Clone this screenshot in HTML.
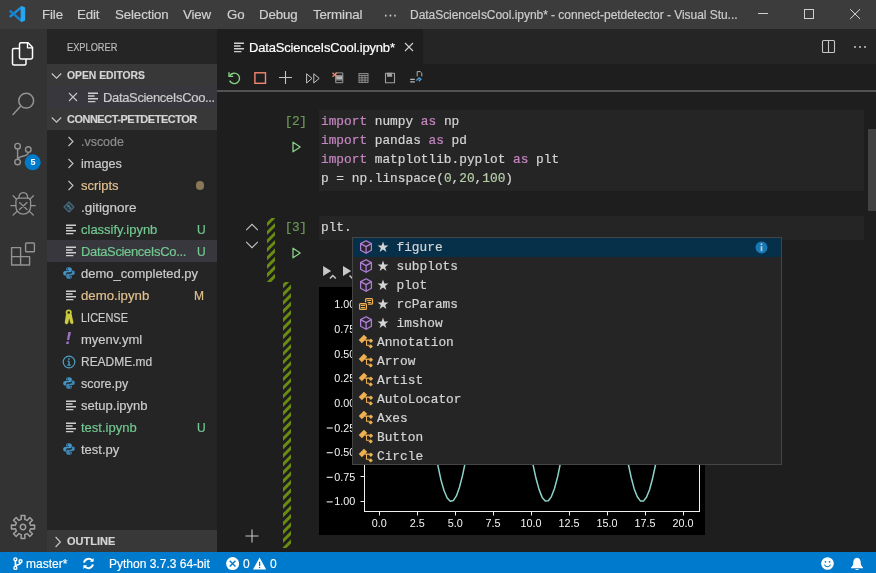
<!DOCTYPE html>
<html>
<head>
<meta charset="utf-8">
<title>VS Code</title>
<style>
*{box-sizing:border-box;margin:0;padding:0}
html,body{width:876px;height:573px;overflow:hidden;background:#1e1e1e}
body{font-family:"Liberation Sans",sans-serif;font-size:13px;color:#cccccc;position:relative;will-change:transform;-webkit-text-stroke:0.18px}
.abs{position:absolute}
#title{left:0;top:0;width:876px;height:29px;background:#3c3c3c}
#title .m{position:absolute;top:-0.3px;height:29px;line-height:29px;font-size:13.3px;letter-spacing:-0.12px;color:#d0d0d0;white-space:nowrap}
#act{left:0;top:29px;width:47px;height:523px;background:#333333}
#side{left:47px;top:29px;width:170px;height:523px;background:#252526}
.hdr{position:absolute;left:0;width:170px;height:22px;background:#383838;line-height:22px;font-size:11px;font-weight:bold;color:#d4d4d4;white-space:nowrap}
.hdr span{position:absolute;left:20px;top:0}
.row{position:absolute;left:0;width:170px;height:22px;line-height:22px;font-size:13px;color:#cccccc;white-space:nowrap}
.row .t{position:absolute;left:34px;top:0.5px}
.row .s{position:absolute;top:0.5px;font-size:12px}
.row svg{position:absolute}
.sx{display:inline-block;transform-origin:0 50%}
#tabs{left:217px;top:29px;width:659px;height:35px;background:#252526}
#tab{left:0;top:0;width:206px;height:35px;background:#1e1e1e}
#status{left:0;top:552px;width:876px;height:22px;background:#007acc;color:#fff;font-size:12px;line-height:22px}
#status .m{position:absolute;top:0.9px;white-space:nowrap;-webkit-text-stroke:0.15px}
.code{font-family:"Liberation Mono",monospace;font-size:12.8px;white-space:pre;color:#d4d4d4;-webkit-text-stroke:0.2px}
.cl{position:absolute;left:0;height:19px;line-height:19px}
.kw{color:#c586c0}.nm{color:#b5cea8}
.sg{position:absolute;left:0;width:428px;height:19px}
.sg .tx{position:absolute;top:0.2px;height:19px;line-height:19px;font-family:"Liberation Mono",monospace;font-size:12.8px;color:#d4d4d4;white-space:pre;-webkit-text-stroke:0.2px}
.sg svg{position:absolute}
</style>
</head>
<body>
<div id="title" class="abs">
<svg class="abs" style="left:0;top:0" width="36" height="29" viewBox="0 0 36 29"><path d="M9.8 16.9 L20.9 7.6" stroke="#1a8fdb" stroke-width="2.3" fill="none"/><path d="M9.8 10.6 L20.9 20.4" stroke="#1482cf" stroke-width="2.4" fill="none"/><path d="M20.6 6.3 L21.9 5.9 L25.2 7.5 V20.5 L21.9 22.1 L20.6 21.7 Z" fill="#25a6f2"/></svg>
<div class="m" id="m1" style="left:42px">File</div>
<div class="m" id="m2" style="left:77px">Edit</div>
<div class="m" id="m3" style="left:115px">Selection</div>
<div class="m" id="m4" style="left:183px">View</div>
<div class="m" id="m5" style="left:227px">Go</div>
<div class="m" id="m6" style="left:259px">Debug</div>
<div class="m" id="m7" style="left:313px">Terminal</div>
<div class="m" id="m8" style="left:383.5px;letter-spacing:0.2px">&#183;&#183;&#183;</div>
<div class="m" id="m9" style="left:410px;top:0.7px;font-size:12px;color:#cccccc;letter-spacing:-0.04px">DataScienceIsCool.ipynb* - connect-petdetector - Visual Stu...</div>
<svg class="abs" style="left:740px;top:0" width="136" height="29" viewBox="0 0 136 29"><g stroke="#d0d0d0" stroke-width="1" fill="none" shape-rendering="crispEdges"><path d="M18 13.5 H28"/><rect x="64.5" y="9.5" width="9" height="9"/></g><path d="M110.2 9.2 L120 18.9 M120 9.2 L110.2 18.9" stroke="#d8d8d8" stroke-width="1" fill="none"/></svg>
</div>
<div id="act" class="abs">
<svg class="abs" style="left:0;top:1px" width="47" height="250" viewBox="0 30 47 250" fill="none">
<g stroke="#ffffff" stroke-width="1.5" stroke-linejoin="round">
<path d="M19.5 48.5 H14 a1.5 1.5 0 0 0 -1.5 1.5 V63.5 a1.5 1.5 0 0 0 1.5 1.5 H24.5 a1.5 1.5 0 0 0 1.5 -1.5 V59"/>
<path d="M21 42.8 H28 L32.5 47.3 V57.5 a1.5 1.5 0 0 1 -1.5 1.5 H21 a1.5 1.5 0 0 1 -1.5 -1.5 V44.3 a1.5 1.5 0 0 1 1.5 -1.5 Z"/>
<path d="M27.5 43 V47.8 H32.3" stroke-width="1.3"/>
</g>
<g stroke="#939393" stroke-width="1.5">
<circle cx="26.2" cy="100.7" r="7.4"/>
<path d="M20.8 106 L12.6 115"/>
</g>
<g stroke="#939393" stroke-width="1.4">
<circle cx="17.6" cy="146.2" r="2.8"/>
<circle cx="17.6" cy="162" r="2.8"/>
<circle cx="28.3" cy="149.6" r="2.8"/>
<path d="M17.6 149 V159.2 M28.3 152.4 C28.3 157 18.5 155.5 17.6 159.2"/>
</g>
<circle cx="32.7" cy="162.3" r="8" fill="#007acc"/>
<g stroke="#939393" stroke-width="1.3" stroke-linecap="round">
<path d="M18.6 198.2 H28 C29.8 198.2 30.6 200 30.6 202 V206.5 C30.6 211 27.5 214.2 23.3 214.2 C19.1 214.2 15.9 211 15.9 206.5 V202 C15.9 200 16.8 198.2 18.6 198.2 Z"/>
<path d="M18.9 198 C18.9 194.5 20.8 192.6 23.3 192.6 C25.8 192.6 27.7 194.5 27.7 198"/>
<path d="M19.5 202.6 L27 209.6 M27 202.6 L19.5 209.6"/>
<path d="M13.1 195.7 L16.6 199.4 M33.4 195.7 L29.9 199.4 M10.9 205.7 H15.6 M31 205.7 H35.2 M13.1 215 L17.2 211.1 M33.3 215 L29.2 211.1"/>
</g>
<g stroke="#939393" stroke-width="1.4" stroke-linejoin="round">
<path d="M11.6 247.6 H20.6 V256.6 H29.6 V265 H11.6 Z M11.6 256.6 H20.6 V265"/>
<rect x="25.6" y="243" width="8.8" height="8.8" rx="0.8"/>
</g>
</svg>
<div class="abs" style="left:27px;top:127px;width:12px;height:12px;line-height:12px;text-align:center;font-size:9px;font-weight:bold;color:#fff;-webkit-text-stroke:0">5</div>
<svg class="abs" style="left:9px;top:484px" width="28" height="28" viewBox="-14 -14 28 28" fill="none" stroke="#a0a0a0" stroke-width="1.5" stroke-linejoin="round">
<path d="M-1.75 -7.60 L-1.93 -11.54 L1.93 -11.54 L1.75 -7.60 L4.13 -6.61 L6.79 -9.53 L9.53 -6.79 L6.61 -4.13 L7.60 -1.75 L11.54 -1.93 L11.54 1.93 L7.60 1.75 L6.61 4.13 L9.53 6.79 L6.79 9.53 L4.13 6.61 L1.75 7.60 L1.93 11.54 L-1.93 11.54 L-1.75 7.60 L-4.13 6.61 L-6.79 9.53 L-9.53 6.79 L-6.61 4.13 L-7.60 1.75 L-11.54 1.93 L-11.54 -1.93 L-7.60 -1.75 L-6.61 -4.13 L-9.53 -6.79 L-6.79 -9.53 L-4.13 -6.61 Z"/>
<circle cx="0" cy="0" r="2.7"/>
</svg>
</div>
<div id="side" class="abs">
<div class="abs" id="expl" style="left:20px;top:0;height:35px;line-height:36px;font-size:11px;color:#bbbbbb"><span class="sx" style="transform:scaleX(0.84)">EXPLORER</span></div>
<div class="hdr" style="top:35px"><svg style="position:absolute;left:4.1px;top:6.5px" width="11" height="10" viewBox="0 0 11 10"><path d="M0.8 2.5 L5.5 7.2 L10.2 2.5" fill="none" stroke="#c8c8c8" stroke-width="1.1"/></svg><span id="hh1" class="sx" style="transform:scaleX(0.94)">OPEN EDITORS</span></div>
<div class="row" style="top:57px;background:#37373d"><svg style="left:21px;top:6px" width="10" height="10" viewBox="0 0 10 10"><path d="M1 1 L9 9 M9 1 L1 9" stroke="#c5c5c5" stroke-width="1.1" fill="none"/></svg><svg style="left:41px;top:6px" width="11" height="11" viewBox="0 0 11 11"><path d="M0 1.2 H10 M0 4 H6.6 M0 6.8 H10 M0 9.6 H7.4" stroke="#cfcfcf" stroke-width="1.4" fill="none"/></svg><span class="t" id="oe" style="left:56px;letter-spacing:-0.35px">DataScienceIsCoo...</span></div>
<div class="hdr" style="top:79px"><svg style="position:absolute;left:4.1px;top:6.5px" width="11" height="10" viewBox="0 0 11 10"><path d="M0.8 2.5 L5.5 7.2 L10.2 2.5" fill="none" stroke="#c8c8c8" stroke-width="1.1"/></svg><span id="hh2" class="sx" style="letter-spacing:-0.45px;transform:scaleX(0.993)">CONNECT-PETDETECTOR</span></div>
<div class="row" style="top:101px"><svg style="left:20px;top:6px" width="8" height="11" viewBox="0 0 8 11"><path d="M1.5 1 L6 5.5 L1.5 10" fill="none" stroke="#c5c5c5" stroke-width="1.1"/></svg><span class="t" style="color:#8c8c8c;display:inline-block;transform-origin:0 50%;transform:scaleX(0.956)">.vscode</span></div>
<div class="row" style="top:123px"><svg style="left:20px;top:6px" width="8" height="11" viewBox="0 0 8 11"><path d="M1.5 1 L6 5.5 L1.5 10" fill="none" stroke="#c5c5c5" stroke-width="1.1"/></svg><span class="t" style="color:#cccccc;display:inline-block;transform-origin:0 50%;transform:scaleX(0.976)">images</span></div>
<div class="row" style="top:145px"><svg style="left:20px;top:6px" width="8" height="11" viewBox="0 0 8 11"><path d="M1.5 1 L6 5.5 L1.5 10" fill="none" stroke="#c5c5c5" stroke-width="1.1"/></svg><span class="t" style="color:#e2c08d">scripts</span><span style="position:absolute;left:148.8px;top:7.4px;width:8.2px;height:8.2px;border-radius:4.1px;background:#8a7758"></span></div>
<div class="row" style="top:167px"><svg style="left:15.8px;top:5px" width="12" height="12" viewBox="0 0 12 12"><path d="M6 1 L11 6 L6 11 L1 6 Z" fill="#2b3a42" stroke="#456b7c" stroke-width="1.1" stroke-linejoin="round"/><circle cx="4.9" cy="4.9" r="0.9" fill="#5b8497"/><circle cx="7.1" cy="7.1" r="0.9" fill="#5b8497"/><path d="M4.9 4.9 L7.1 7.1 M6 3.9 V6" stroke="#5b8497" stroke-width="0.8"/></svg><span class="t" style="color:#cccccc;display:inline-block;transform-origin:0 50%;transform:scaleX(1.037)">.gitignore</span></div>
<div class="row" style="top:189px"><svg style="left:19.3px;top:6px" width="11" height="11" viewBox="0 0 11 11"><path d="M0 1.2 H10 M0 4 H6.6 M0 6.8 H10 M0 9.6 H7.4" stroke="#cfcfcf" stroke-width="1.4" fill="none"/></svg><span class="t" style="color:#73c991">classify.ipynb</span><span class="s" style="color:#73c991;left:150px">U</span></div>
<div class="row" style="top:211px;background:#37373d"><svg style="left:19.3px;top:6px" width="11" height="11" viewBox="0 0 11 11"><path d="M0 1.2 H10 M0 4 H6.6 M0 6.8 H10 M0 9.6 H7.4" stroke="#cfcfcf" stroke-width="1.4" fill="none"/></svg><span class="t" style="color:#73c991;letter-spacing:-0.35px">DataScienceIsCo...</span><span class="s" style="color:#73c991;left:150px">U</span></div>
<div class="row" style="top:233px"><svg style="left:16.2px;top:5px" width="12" height="12" viewBox="0 0 12 12"><path d="M5.9 0.3 C3.6 0.3 3.2 1.2 3.2 2.1 V3.4 H6 V4 H1.9 C0.7 4 0.2 5 0.2 6.2 C0.2 7.5 0.7 8.4 1.9 8.4 H3 V7 C3 5.9 3.8 5.2 4.9 5.2 H7.4 C8.3 5.2 8.8 4.6 8.8 3.8 V2.1 C8.8 1 7.9 0.3 5.9 0.3 Z" fill="#4494c4"/><path d="M6.1 11.7 C8.4 11.7 8.8 10.8 8.8 9.9 V8.6 H6 V8 H10.1 C11.3 8 11.8 7 11.8 5.8 C11.8 4.5 11.3 3.6 10.1 3.6 H9 V5 C9 6.1 8.2 6.8 7.1 6.8 H4.6 C3.7 6.8 3.2 7.4 3.2 8.2 V9.9 C3.2 11 4.1 11.7 6.1 11.7 Z" fill="#3b86b4"/><circle cx="4.6" cy="1.9" r="0.55" fill="#252526"/><circle cx="7.4" cy="10.1" r="0.55" fill="#252526"/></svg><span class="t" style="color:#cccccc">demo_completed.py</span></div>
<div class="row" style="top:255px"><svg style="left:19.3px;top:6px" width="11" height="11" viewBox="0 0 11 11"><path d="M0 1.2 H10 M0 4 H6.6 M0 6.8 H10 M0 9.6 H7.4" stroke="#cfcfcf" stroke-width="1.4" fill="none"/></svg><span class="t" style="color:#e2c08d;display:inline-block;transform-origin:0 50%;transform:scaleX(1.015)">demo.ipynb</span><span class="s" style="color:#e2c08d;left:147px">M</span></div>
<div class="row" style="top:277px"><svg style="left:17px;top:2.5px" width="10" height="16" viewBox="0 0 10 16"><circle cx="4.7" cy="3.5" r="2.2" fill="none" stroke="#cbcb41" stroke-width="1.7"/><path d="M2 5.2 L7.6 5 L9.5 13.8 L8.3 15.3 L6.4 14.2 L5.1 9.2 L4.3 14.2 L2.1 15.4 L0.7 13.8 Z" fill="#cbcb41"/></svg><span class="t" style="color:#cccccc;display:inline-block;transform-origin:0 50%;transform:scaleX(0.845)">LICENSE</span></div>
<div class="row" style="top:299px"><div style="position:absolute;left:18.5px;top:0;color:#a074c4;font-weight:bold;font-style:italic;font-size:17px;line-height:21px">!</div><span class="t" style="color:#cccccc">myenv.yml</span></div>
<div class="row" style="top:321px"><svg style="left:15px;top:4.5px" width="14" height="14" viewBox="0 0 14 14"><circle cx="7" cy="7" r="5.8" fill="none" stroke="#4f9fc4" stroke-width="1.2"/><path d="M7 6 V10 M5.6 6.2 H7 M5.4 10.2 H8.6" stroke="#4f9fc4" stroke-width="1.3" fill="none"/><circle cx="6.9" cy="3.9" r="0.9" fill="#4f9fc4"/></svg><span class="t" style="color:#cccccc;display:inline-block;transform-origin:0 50%;transform:scaleX(0.92)">README.md</span></div>
<div class="row" style="top:343px"><svg style="left:16.2px;top:5px" width="12" height="12" viewBox="0 0 12 12"><path d="M5.9 0.3 C3.6 0.3 3.2 1.2 3.2 2.1 V3.4 H6 V4 H1.9 C0.7 4 0.2 5 0.2 6.2 C0.2 7.5 0.7 8.4 1.9 8.4 H3 V7 C3 5.9 3.8 5.2 4.9 5.2 H7.4 C8.3 5.2 8.8 4.6 8.8 3.8 V2.1 C8.8 1 7.9 0.3 5.9 0.3 Z" fill="#4494c4"/><path d="M6.1 11.7 C8.4 11.7 8.8 10.8 8.8 9.9 V8.6 H6 V8 H10.1 C11.3 8 11.8 7 11.8 5.8 C11.8 4.5 11.3 3.6 10.1 3.6 H9 V5 C9 6.1 8.2 6.8 7.1 6.8 H4.6 C3.7 6.8 3.2 7.4 3.2 8.2 V9.9 C3.2 11 4.1 11.7 6.1 11.7 Z" fill="#3b86b4"/><circle cx="4.6" cy="1.9" r="0.55" fill="#252526"/><circle cx="7.4" cy="10.1" r="0.55" fill="#252526"/></svg><span class="t" style="color:#cccccc;display:inline-block;transform-origin:0 50%;transform:scaleX(0.96)">score.py</span></div>
<div class="row" style="top:365px"><svg style="left:19.3px;top:6px" width="11" height="11" viewBox="0 0 11 11"><path d="M0 1.2 H10 M0 4 H6.6 M0 6.8 H10 M0 9.6 H7.4" stroke="#cfcfcf" stroke-width="1.4" fill="none"/></svg><span class="t" style="color:#cccccc">setup.ipynb</span></div>
<div class="row" style="top:387px"><svg style="left:19.3px;top:6px" width="11" height="11" viewBox="0 0 11 11"><path d="M0 1.2 H10 M0 4 H6.6 M0 6.8 H10 M0 9.6 H7.4" stroke="#cfcfcf" stroke-width="1.4" fill="none"/></svg><span class="t" style="color:#73c991">test.ipynb</span><span class="s" style="color:#73c991;left:150px">U</span></div>
<div class="row" style="top:409px"><svg style="left:16.2px;top:5px" width="12" height="12" viewBox="0 0 12 12"><path d="M5.9 0.3 C3.6 0.3 3.2 1.2 3.2 2.1 V3.4 H6 V4 H1.9 C0.7 4 0.2 5 0.2 6.2 C0.2 7.5 0.7 8.4 1.9 8.4 H3 V7 C3 5.9 3.8 5.2 4.9 5.2 H7.4 C8.3 5.2 8.8 4.6 8.8 3.8 V2.1 C8.8 1 7.9 0.3 5.9 0.3 Z" fill="#4494c4"/><path d="M6.1 11.7 C8.4 11.7 8.8 10.8 8.8 9.9 V8.6 H6 V8 H10.1 C11.3 8 11.8 7 11.8 5.8 C11.8 4.5 11.3 3.6 10.1 3.6 H9 V5 C9 6.1 8.2 6.8 7.1 6.8 H4.6 C3.7 6.8 3.2 7.4 3.2 8.2 V9.9 C3.2 11 4.1 11.7 6.1 11.7 Z" fill="#3b86b4"/><circle cx="4.6" cy="1.9" r="0.55" fill="#252526"/><circle cx="7.4" cy="10.1" r="0.55" fill="#252526"/></svg><span class="t" style="color:#cccccc">test.py</span></div>
<div class="hdr" style="top:501px"><svg style="position:absolute;left:6.5px;top:5.5px" width="8" height="12" viewBox="0 0 8 12"><path d="M1.6 1 L6.4 6 L1.6 11" fill="none" stroke="#c8c8c8" stroke-width="1.1"/></svg><span>OUTLINE</span></div>
</div>
<div id="tabs" class="abs">
<div id="tab" class="abs">
<svg class="abs" style="left:17px;top:12.5px" width="11" height="11" viewBox="0 0 11 11"><path d="M0 1.2 H10 M0 4 H6.6 M0 6.8 H10 M0 9.6 H7.4" stroke="#cfcfcf" stroke-width="1.4" fill="none"/></svg>
<div class="abs" id="tabt" style="left:32px;top:0.7px;height:35px;line-height:36px;color:#ffffff;font-size:13px;white-space:nowrap;letter-spacing:-0.19px">DataScienceIsCool.ipynb*</div>
<svg class="abs" style="left:187px;top:13px" width="10" height="10" viewBox="0 0 10 10"><path d="M1 1 L9 9 M9 1 L1 9" stroke="#d0d0d0" stroke-width="1.1" fill="none"/></svg>
</div>
<svg class="abs" style="left:604px;top:10px" width="16" height="15" viewBox="0 0 16 15"><rect x="1.5" y="1.5" width="12" height="12" rx="1" fill="none" stroke="#c5c5c5" stroke-width="1.1"/><path d="M7.5 1.5 V13.5" stroke="#c5c5c5" stroke-width="1.1"/></svg>
<svg class="abs" style="left:635px;top:16px" width="16" height="4" viewBox="0 0 16 4"><circle cx="3" cy="2" r="1" fill="#c5c5c5"/><circle cx="8" cy="2" r="1" fill="#c5c5c5"/><circle cx="13" cy="2" r="1" fill="#c5c5c5"/></svg>
</div>
<div id="ed" class="abs" style="left:217px;top:64px;width:659px;height:488px;background:#1e1e1e">
<svg class="abs" style="left:0;top:0" width="230" height="26" viewBox="217 64 230 26" fill="none">
<g stroke="#89d185" stroke-width="1.4"><path d="M229.9 75.6 A5.2 5.2 0 1 1 229.6 80.6"/><path d="M229 72.2 V76.4 H233.2" stroke-linejoin="miter"/></g>
<rect x="254.9" y="72.8" width="10.6" height="10.5" stroke="#f48771" stroke-width="1.4"/>
<path d="M285.5 71 V84 M279 77.5 H292" stroke="#c5c5c5" stroke-width="1.1"/>
<g stroke="#c5c5c5" stroke-width="1" stroke-linejoin="round"><path d="M306.6 73.8 L312 78.4 L306.6 83 Z"/><path d="M313.8 73.8 L319.2 78.4 L313.8 83 Z"/></g>
<g stroke="#9a9a9a" stroke-width="1"><path d="M335.7 72.9 H342.8 V82.7 H335.7 Z M335.7 75.6 H342.8 M335.7 80 H342.8"/></g>
<rect x="336.2" y="76.2" width="6.2" height="3.2" fill="#b8b8b8"/>
<path d="M332.5 72.7 L336.7 76.9 M336.7 72.7 L332.5 76.9" stroke="#f48771" stroke-width="1.3"/>
<g stroke="#8e8e8e" stroke-width="1"><rect x="359" y="73.6" width="9" height="8.8"/><path d="M359 75.4 H368 M359 77.8 H368 M359 80.1 H368 M362 75 V82.4 M365 75 V82.4"/></g>
<g stroke="#a0a0a0" stroke-width="1.1" stroke-linejoin="round"><path d="M385.5 73.2 H394.5 V82.7 H385.5 Z"/><rect x="387.6" y="73.4" width="4" height="2.8" fill="#a0a0a0"/></g>
<g stroke="#b8b8b8" stroke-width="1.3"><path d="M410.2 79.3 H414.8 M410.2 81.9 H414.8"/></g>
<path d="M417.2 76.4 V71.6 H420.2 L421.8 73.2 V76.4" stroke="#b0b0b0" stroke-width="1"/>
<path d="M416.6 80.6 C417.4 78.2 419.8 78 420.6 79.2 M418.6 77.4 L420.9 79.3 L418.8 81.2" stroke="#4da3e0" stroke-width="1.3"/>
</svg>
<div class="abs" style="left:0;top:26px;width:659px;height:2px;background:#525252"></div>
<div class="abs code" id="c2" style="left:67.80000000000001px;top:47.5px;height:19px;line-height:19px;color:#6a9955;letter-spacing:-0.45px">[2]</div>
<svg class="abs" style="left:74px;top:77px" width="12" height="12" viewBox="0 0 12 12"><path d="M2 1.2 L9.2 6 L2 10.8 Z" fill="none" stroke="#89d185" stroke-width="1.3" stroke-linejoin="round"/></svg>
<div class="abs" style="left:102px;top:46px;width:545px;height:81px;background:#252526">
<div class="cl code" style="left:2px;top:2.2px"><span class="kw">import</span> numpy <span class="kw">as</span> np</div>
<div class="cl code" style="left:2px;top:21.2px"><span class="kw">import</span> pandas <span class="kw">as</span> pd</div>
<div class="cl code" style="left:2px;top:40.2px"><span class="kw">import</span> matplotlib.pyplot <span class="kw">as</span> plt</div>
<div class="cl code" style="left:2px;top:59.2px">p = np.linspace(<span class="nm">0</span>,<span class="nm">20</span>,<span class="nm">100</span>)</div>
</div>
<svg class="abs" style="left:29px;top:158px" width="12" height="28" viewBox="0 0 12 28" fill="none" stroke="#c5c5c5" stroke-width="1.1"><path d="M0.2 8 L6 2.3 L11.8 8"/><path d="M0.2 20 L6 25.7 L11.8 20"/></svg>
<svg class="abs" style="left:50px;top:153.8px" width="8" height="64.2" viewBox="0 0 8 64.2"><path d="M-2 -8.48 L10 -20.48 M-2 0.01 L10 -11.99 M-2 8.50 L10 -3.50 M-2 16.99 L10 4.99 M-2 25.48 L10 13.48 M-2 33.97 L10 21.97 M-2 42.46 L10 30.46 M-2 50.95 L10 38.95 M-2 59.44 L10 47.44 M-2 67.93 L10 55.93 M-2 76.42 L10 64.42" stroke="#6a8c12" stroke-width="2.95" fill="none"/></svg>
<div class="abs code" id="c3" style="left:67.80000000000001px;top:153.5px;height:19px;line-height:19px;color:#6a9955;letter-spacing:-0.45px">[3]</div>
<svg class="abs" style="left:74px;top:183px" width="12" height="12" viewBox="0 0 12 12"><path d="M2 1.2 L9.2 6 L2 10.8 Z" fill="none" stroke="#89d185" stroke-width="1.3" stroke-linejoin="round"/></svg>
<div class="abs" style="left:102px;top:152px;width:545px;height:24px;background:#252526"><div class="cl code" style="left:2px;top:2.2px">plt.</div></div>
<svg class="abs" style="left:104px;top:200px" width="34" height="18" viewBox="0 0 34 18"><path d="M2.1 1.9 L10.2 7 L2.1 12.1 Z" fill="#c8c8c8"/><path d="M8.9 14.5 L11.8 11.5 L14.8 14.5" fill="none" stroke="#c8c8c8" stroke-width="1.5"/><path d="M22 1.9 L30.1 7 L22 12.1 Z" fill="#c8c8c8"/><path d="M28.5 11.5 L31.5 14.5 L34.5 11.5" fill="none" stroke="#c8c8c8" stroke-width="1.5"/></svg>
<svg class="abs" style="left:66px;top:217.8px" width="8" height="266.3" viewBox="0 0 8 266.3"><path d="M-2 -10.87 L10 -22.87 M-2 -2.38 L10 -14.38 M-2 6.11 L10 -5.89 M-2 14.60 L10 2.60 M-2 23.09 L10 11.09 M-2 31.58 L10 19.58 M-2 40.07 L10 28.07 M-2 48.56 L10 36.56 M-2 57.05 L10 45.05 M-2 65.54 L10 53.54 M-2 74.03 L10 62.03 M-2 82.52 L10 70.52 M-2 91.01 L10 79.01 M-2 99.50 L10 87.50 M-2 107.99 L10 95.99 M-2 116.48 L10 104.48 M-2 124.97 L10 112.97 M-2 133.46 L10 121.46 M-2 141.95 L10 129.95 M-2 150.44 L10 138.44 M-2 158.93 L10 146.93 M-2 167.42 L10 155.42 M-2 175.91 L10 163.91 M-2 184.40 L10 172.40 M-2 192.89 L10 180.89 M-2 201.38 L10 189.38 M-2 209.87 L10 197.87 M-2 218.36 L10 206.36 M-2 226.85 L10 214.85 M-2 235.34 L10 223.34 M-2 243.83 L10 231.83 M-2 252.32 L10 240.32 M-2 260.81 L10 248.81 M-2 269.30 L10 257.30 M-2 277.79 L10 265.79" stroke="#6a8c12" stroke-width="2.95" fill="none"/></svg>
<svg class="abs" style="left:102px;top:223px" width="386" height="248" viewBox="0 0 386 248">
<rect width="386" height="248" fill="#000"/>
<path d="M60.7 116.0 L63.8 96.2 L66.8 77.3 L69.9 59.9 L73.0 44.8 L76.0 32.6 L79.1 23.8 L82.2 18.7 L85.2 17.6 L88.3 20.5 L91.4 27.3 L94.4 37.7 L97.5 51.2 L100.6 67.5 L103.6 85.6 L106.7 105.1 L109.8 124.9 L112.8 144.4 L115.9 162.8 L119.0 179.2 L122.0 193.1 L125.1 203.8 L128.2 211.0 L131.2 214.3 L134.3 213.6 L137.4 208.9 L140.4 200.5 L143.5 188.6 L146.6 173.8 L149.6 156.6 L152.7 137.7 L155.8 118.0 L158.8 98.2 L161.9 79.1 L165.0 61.6 L168.0 46.2 L171.1 33.7 L174.2 24.5 L177.2 19.0 L180.3 17.5 L183.4 20.0 L186.4 26.4 L189.5 36.5 L192.6 49.7 L195.6 65.7 L198.7 83.7 L201.8 103.1 L204.8 122.9 L207.9 142.5 L211.0 161.0 L214.0 177.6 L217.1 191.8 L220.2 202.9 L223.2 210.4 L226.3 214.1 L229.4 213.8 L232.4 209.6 L235.5 201.5 L238.6 189.9 L241.6 175.4 L244.7 158.4 L247.8 139.7 L250.8 120.0 L253.9 100.2 L257.0 81.0 L260.0 63.3 L263.1 47.6 L266.2 34.8 L269.2 25.3 L272.3 19.4 L275.4 17.5 L278.4 19.6 L281.5 25.6 L284.6 35.3 L287.6 48.3 L290.7 64.0 L293.8 81.8 L296.8 101.0 L299.9 120.9 L303.0 140.5 L306.0 159.2 L309.1 176.1 L312.2 190.5 L315.2 201.9 L318.3 209.8 L321.4 213.9 L324.4 214.1 L327.5 210.2 L330.6 202.5 L333.6 191.3 L336.7 177.0 L339.8 160.2 L342.8 141.7 L345.9 122.1 L349.0 102.2 L352.0 82.9 L355.1 65.0 L358.2 49.1 L361.2 36.0 L364.3 26.1" fill="none" stroke="#8dd3c7" stroke-width="1.5" stroke-linejoin="round"/>
<rect x="45.5" y="6.5" width="335.0" height="218.0" fill="none" stroke="#f0f0f0" stroke-width="1"/>
<g stroke="#f0f0f0" stroke-width="1" fill="#f4f4f4" font-family="Liberation Sans, sans-serif" font-size="10.8px">
<path d="M60.5 224.5 v4"/><text x="60.3" y="239.8" text-anchor="middle" stroke="none">0.0</text>
<path d="M98.5 224.5 v4"/><text x="98.2" y="239.8" text-anchor="middle" stroke="none">2.5</text>
<path d="M136.5 224.5 v4"/><text x="136.2" y="239.8" text-anchor="middle" stroke="none">5.0</text>
<path d="M174.5 224.5 v4"/><text x="174.1" y="239.8" text-anchor="middle" stroke="none">7.5</text>
<path d="M212.5 224.5 v4"/><text x="212.1" y="239.8" text-anchor="middle" stroke="none">10.0</text>
<path d="M250.5 224.5 v4"/><text x="250.1" y="239.8" text-anchor="middle" stroke="none">12.5</text>
<path d="M288.5 224.5 v4"/><text x="288.0" y="239.8" text-anchor="middle" stroke="none">15.0</text>
<path d="M326.5 224.5 v4"/><text x="325.9" y="239.8" text-anchor="middle" stroke="none">17.5</text>
<path d="M364.5 224.5 v4"/><text x="363.9" y="239.8" text-anchor="middle" stroke="none">20.0</text>
<path d="M45.5 17.5 h-4"/><text x="36.2" y="21.4" text-anchor="end" stroke="none">1.00</text>
<path d="M45.5 42.5 h-4"/><text x="36.2" y="46.0" text-anchor="end" stroke="none">0.75</text>
<path d="M45.5 66.5 h-4"/><text x="36.2" y="70.7" text-anchor="end" stroke="none">0.50</text>
<path d="M45.5 91.5 h-4"/><text x="36.2" y="95.3" text-anchor="end" stroke="none">0.25</text>
<path d="M45.5 116.5 h-4"/><text x="36.2" y="119.9" text-anchor="end" stroke="none">0.00</text>
<path d="M45.5 140.5 h-4"/><text x="36.2" y="144.5" text-anchor="end" stroke="none">0.25</text>
<path d="M7.7 141.0 h6" stroke-width="1.1"/>
<path d="M45.5 165.5 h-4"/><text x="36.2" y="169.2" text-anchor="end" stroke="none">0.50</text>
<path d="M7.7 165.7 h6" stroke-width="1.1"/>
<path d="M45.5 189.5 h-4"/><text x="36.2" y="193.8" text-anchor="end" stroke="none">0.75</text>
<path d="M7.7 190.3 h6" stroke-width="1.1"/>
<path d="M45.5 214.5 h-4"/><text x="36.2" y="218.4" text-anchor="end" stroke="none">1.00</text>
<path d="M7.7 214.9 h6" stroke-width="1.1"/>
</g></svg>
<svg class="abs" style="left:27.599999999999994px;top:465.4px" width="14" height="14" viewBox="0 0 14 14"><path d="M7 0.5 V13.5 M0.5 7 H13.5" stroke="#c5c5c5" stroke-width="1.1" fill="none"/></svg>
<div class="abs" style="left:651px;top:65px;width:8px;height:82px;background:#424242"></div>
<div class="abs" style="left:135px;top:173px;width:430px;height:228px;background:#252526;border:1px solid #454545;overflow:hidden">
<div class="sg" style="top:0px;background:#062f4a"><svg style="left:0;top:0" width="24" height="19" viewBox="0 0 24 19" fill="#29252c" stroke="#b180d7" stroke-width="1.25" stroke-linejoin="round"><path d="M13.1 2.7 L18.4 5.6 V12.2 L13.1 15.3 L7.6 12.2 V5.6 Z"/><path d="M7.6 5.6 L13.1 8.6 L18.4 5.6 M13.1 8.6 V15.3" fill="none"/></svg><svg style="left:24px;top:3.4px" width="12" height="12" viewBox="-6 -6.3 12 12"><path d="M0.00 -5.70 L1.35 -1.86 L5.42 -1.76 L2.19 0.71 L3.35 4.61 L0.00 2.30 L-3.35 4.61 L-2.19 0.71 L-5.42 -1.76 L-1.35 -1.86 Z" fill="#d4d4d4"/></svg><span class="tx" style="left:43.5px">figure</span></div>
<div class="sg" style="top:19px"><svg style="left:0;top:0" width="24" height="19" viewBox="0 0 24 19" fill="#29252c" stroke="#b180d7" stroke-width="1.25" stroke-linejoin="round"><path d="M13.1 2.7 L18.4 5.6 V12.2 L13.1 15.3 L7.6 12.2 V5.6 Z"/><path d="M7.6 5.6 L13.1 8.6 L18.4 5.6 M13.1 8.6 V15.3" fill="none"/></svg><svg style="left:24px;top:3.4px" width="12" height="12" viewBox="-6 -6.3 12 12"><path d="M0.00 -5.70 L1.35 -1.86 L5.42 -1.76 L2.19 0.71 L3.35 4.61 L0.00 2.30 L-3.35 4.61 L-2.19 0.71 L-5.42 -1.76 L-1.35 -1.86 Z" fill="#d4d4d4"/></svg><span class="tx" style="left:43.5px">subplots</span></div>
<div class="sg" style="top:38px"><svg style="left:0;top:0" width="24" height="19" viewBox="0 0 24 19" fill="#29252c" stroke="#b180d7" stroke-width="1.25" stroke-linejoin="round"><path d="M13.1 2.7 L18.4 5.6 V12.2 L13.1 15.3 L7.6 12.2 V5.6 Z"/><path d="M7.6 5.6 L13.1 8.6 L18.4 5.6 M13.1 8.6 V15.3" fill="none"/></svg><svg style="left:24px;top:3.4px" width="12" height="12" viewBox="-6 -6.3 12 12"><path d="M0.00 -5.70 L1.35 -1.86 L5.42 -1.76 L2.19 0.71 L3.35 4.61 L0.00 2.30 L-3.35 4.61 L-2.19 0.71 L-5.42 -1.76 L-1.35 -1.86 Z" fill="#d4d4d4"/></svg><span class="tx" style="left:43.5px">plot</span></div>
<div class="sg" style="top:57px"><svg style="left:0;top:0" width="24" height="19" viewBox="0 0 24 19" fill="none" stroke="#eeb050" stroke-width="1.3" stroke-linecap="round" stroke-linejoin="round"><path d="M12.6 6.7 V4.7 a1 1 0 0 1 1 -1 H18.5 a1 1 0 0 1 1 1 V8.2 a1 1 0 0 1 -1 1 H15.6"/><path d="M14.6 5.5 H17.6 M15 7.5 H17.6" stroke-width="1.1"/><rect x="6.6" y="8.7" width="6.8" height="5.7" rx="1" fill="#1d1d24"/><path d="M8.4 10.4 H11.6 M8.4 12.6 H11.6" stroke-width="1.1"/></svg><svg style="left:24px;top:3.4px" width="12" height="12" viewBox="-6 -6.3 12 12"><path d="M0.00 -5.70 L1.35 -1.86 L5.42 -1.76 L2.19 0.71 L3.35 4.61 L0.00 2.30 L-3.35 4.61 L-2.19 0.71 L-5.42 -1.76 L-1.35 -1.86 Z" fill="#d4d4d4"/></svg><span class="tx" style="left:43.5px">rcParams</span></div>
<div class="sg" style="top:76px"><svg style="left:0;top:0" width="24" height="19" viewBox="0 0 24 19" fill="#29252c" stroke="#b180d7" stroke-width="1.25" stroke-linejoin="round"><path d="M13.1 2.7 L18.4 5.6 V12.2 L13.1 15.3 L7.6 12.2 V5.6 Z"/><path d="M7.6 5.6 L13.1 8.6 L18.4 5.6 M13.1 8.6 V15.3" fill="none"/></svg><svg style="left:24px;top:3.4px" width="12" height="12" viewBox="-6 -6.3 12 12"><path d="M0.00 -5.70 L1.35 -1.86 L5.42 -1.76 L2.19 0.71 L3.35 4.61 L0.00 2.30 L-3.35 4.61 L-2.19 0.71 L-5.42 -1.76 L-1.35 -1.86 Z" fill="#d4d4d4"/></svg><span class="tx" style="left:43.5px">imshow</span></div>
<div class="sg" style="top:95px"><svg style="left:0;top:0" width="24" height="19" viewBox="0 0 24 19" fill="#eeb050"><path d="M5.7 6.9 L10.9 1.8 L14.2 4.8 L8.9 10.2 Z"/><path d="M17.9 5.6 L20.1 7.8 L17.9 10 L15.7 7.8 Z"/><path d="M17.7 11.2 L19.9 13.4 L17.7 15.6 L15.5 13.4 Z"/><path d="M11.5 7.1 H16.8 M13.5 7.1 V12.3 H16.4" fill="none" stroke="#eeb050" stroke-width="1.05"/></svg><span class="tx" style="left:24px">Annotation</span></div>
<div class="sg" style="top:114px"><svg style="left:0;top:0" width="24" height="19" viewBox="0 0 24 19" fill="#eeb050"><path d="M5.7 6.9 L10.9 1.8 L14.2 4.8 L8.9 10.2 Z"/><path d="M17.9 5.6 L20.1 7.8 L17.9 10 L15.7 7.8 Z"/><path d="M17.7 11.2 L19.9 13.4 L17.7 15.6 L15.5 13.4 Z"/><path d="M11.5 7.1 H16.8 M13.5 7.1 V12.3 H16.4" fill="none" stroke="#eeb050" stroke-width="1.05"/></svg><span class="tx" style="left:24px">Arrow</span></div>
<div class="sg" style="top:133px"><svg style="left:0;top:0" width="24" height="19" viewBox="0 0 24 19" fill="#eeb050"><path d="M5.7 6.9 L10.9 1.8 L14.2 4.8 L8.9 10.2 Z"/><path d="M17.9 5.6 L20.1 7.8 L17.9 10 L15.7 7.8 Z"/><path d="M17.7 11.2 L19.9 13.4 L17.7 15.6 L15.5 13.4 Z"/><path d="M11.5 7.1 H16.8 M13.5 7.1 V12.3 H16.4" fill="none" stroke="#eeb050" stroke-width="1.05"/></svg><span class="tx" style="left:24px">Artist</span></div>
<div class="sg" style="top:152px"><svg style="left:0;top:0" width="24" height="19" viewBox="0 0 24 19" fill="#eeb050"><path d="M5.7 6.9 L10.9 1.8 L14.2 4.8 L8.9 10.2 Z"/><path d="M17.9 5.6 L20.1 7.8 L17.9 10 L15.7 7.8 Z"/><path d="M17.7 11.2 L19.9 13.4 L17.7 15.6 L15.5 13.4 Z"/><path d="M11.5 7.1 H16.8 M13.5 7.1 V12.3 H16.4" fill="none" stroke="#eeb050" stroke-width="1.05"/></svg><span class="tx" style="left:24px">AutoLocator</span></div>
<div class="sg" style="top:171px"><svg style="left:0;top:0" width="24" height="19" viewBox="0 0 24 19" fill="#eeb050"><path d="M5.7 6.9 L10.9 1.8 L14.2 4.8 L8.9 10.2 Z"/><path d="M17.9 5.6 L20.1 7.8 L17.9 10 L15.7 7.8 Z"/><path d="M17.7 11.2 L19.9 13.4 L17.7 15.6 L15.5 13.4 Z"/><path d="M11.5 7.1 H16.8 M13.5 7.1 V12.3 H16.4" fill="none" stroke="#eeb050" stroke-width="1.05"/></svg><span class="tx" style="left:24px">Axes</span></div>
<div class="sg" style="top:190px"><svg style="left:0;top:0" width="24" height="19" viewBox="0 0 24 19" fill="#eeb050"><path d="M5.7 6.9 L10.9 1.8 L14.2 4.8 L8.9 10.2 Z"/><path d="M17.9 5.6 L20.1 7.8 L17.9 10 L15.7 7.8 Z"/><path d="M17.7 11.2 L19.9 13.4 L17.7 15.6 L15.5 13.4 Z"/><path d="M11.5 7.1 H16.8 M13.5 7.1 V12.3 H16.4" fill="none" stroke="#eeb050" stroke-width="1.05"/></svg><span class="tx" style="left:24px">Button</span></div>
<div class="sg" style="top:209px"><svg style="left:0;top:0" width="24" height="19" viewBox="0 0 24 19" fill="#eeb050"><path d="M5.7 6.9 L10.9 1.8 L14.2 4.8 L8.9 10.2 Z"/><path d="M17.9 5.6 L20.1 7.8 L17.9 10 L15.7 7.8 Z"/><path d="M17.7 11.2 L19.9 13.4 L17.7 15.6 L15.5 13.4 Z"/><path d="M11.5 7.1 H16.8 M13.5 7.1 V12.3 H16.4" fill="none" stroke="#eeb050" stroke-width="1.05"/></svg><span class="tx" style="left:24px">Circle</span></div>
<svg class="abs" style="left:402.4px;top:3.35px" width="13" height="13" viewBox="0 0 13 13"><circle cx="6.5" cy="6.5" r="6" fill="#1878b4"/><path d="M6.5 5.2 V10.2" stroke="#c4c8cc" stroke-width="1.7"/><circle cx="6.5" cy="3.3" r="0.95" fill="#c4c8cc"/></svg>
</div>
</div>
<div id="status" class="abs">
<svg class="abs" style="left:13px;top:4.6px" width="10" height="14" viewBox="0 0 10 14" fill="none" stroke="#fff" stroke-width="1.35"><circle cx="2.4" cy="2.3" r="1.5"/><circle cx="2.4" cy="10.9" r="1.5"/><circle cx="7.5" cy="4.2" r="1.5"/><path d="M2.4 3.8 V9.4 M7.5 5.7 C7.5 8.2 2.9 7.4 2.4 9.4" stroke-width="1.6"/></svg>
<div class="m" id="s1" style="left:26px">master*</div>
<svg class="abs" style="left:81.5px;top:5px" width="13" height="13" viewBox="0 0 14 14" fill="none" stroke="#fff" stroke-width="2.1"><path d="M2.2 6 A5 5 0 0 1 11 3.8"/><path d="M11.8 8 A5 5 0 0 1 3 10.2"/><path d="M12.5 1 V5 H8.5 Z" fill="#fff" stroke="none"/><path d="M1.5 13 V9 H5.5 Z" fill="#fff" stroke="none"/></svg>
<div class="m" id="s2" style="left:109px">Python 3.7.3 64-bit</div>
<svg class="abs" style="left:226.2px;top:4.8px" width="13.2" height="13.2" viewBox="0 0 12 12"><circle cx="6" cy="6" r="5.9" fill="#fff"/><path d="M3.4 3.4 L8.6 8.6 M8.6 3.4 L3.4 8.6" stroke="#007acc" stroke-width="1.25"/></svg>
<div class="m" id="s3" style="left:243px">0</div>
<svg class="abs" style="left:253.2px;top:4.9px" width="13.2" height="13" viewBox="0 0 13 12"><path d="M6.5 0 L13 12 H0 Z" fill="#fff"/><path d="M6.5 4.2 V8.4" stroke="#007acc" stroke-width="1.3"/><circle cx="6.5" cy="10" r="0.75" fill="#007acc"/></svg>
<div class="m" id="s4" style="left:270px">0</div>
<svg class="abs" style="left:821.3px;top:4.8px" width="13" height="13" viewBox="0 0 14 14"><circle cx="7" cy="7" r="6.8" fill="#fff"/><circle cx="4.8" cy="5.2" r="0.95" fill="#007acc"/><circle cx="9.2" cy="5.2" r="0.95" fill="#007acc"/><path d="M3.6 8.2 A3.7 3.7 0 0 0 10.4 8.2" fill="none" stroke="#007acc" stroke-width="1.1"/></svg>
<svg class="abs" style="left:850px;top:4.6px" width="14" height="14" viewBox="0 0 14 14"><path d="M7 0.8 C4.3 0.8 3.3 3 3.3 5.5 C3.3 8.5 2 9.5 1 10.5 V11.3 H13 V10.5 C12 9.5 10.7 8.5 10.7 5.5 C10.7 3 9.7 0.8 7 0.8 Z" fill="#fff"/><path d="M5.3 11.9 A1.8 1.8 0 0 0 8.7 11.9 Z" fill="#fff"/></svg>
</div>
</body>
</html>
